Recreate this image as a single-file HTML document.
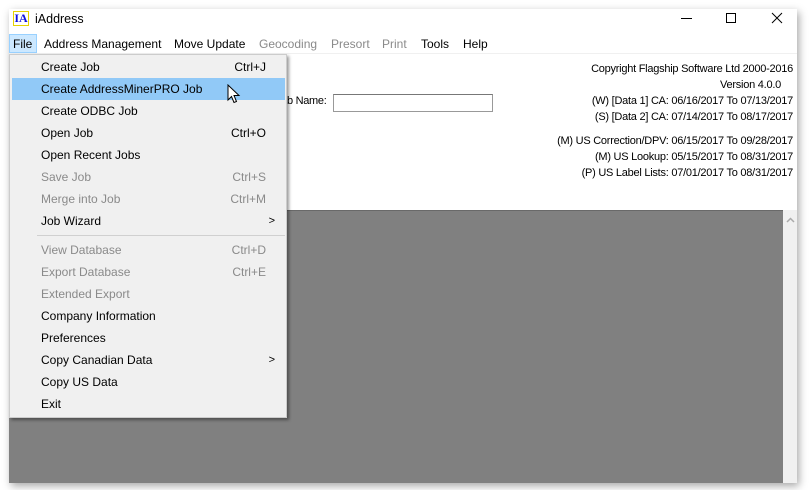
<!DOCTYPE html>
<html><head><meta charset="utf-8"><style>
*{margin:0;padding:0;box-sizing:border-box}
body{width:809px;height:490px;background:#fff;position:relative;overflow:hidden;font-family:"Liberation Sans",sans-serif;font-size:12px;color:#000}
.win{position:absolute;left:9px;top:9px;width:788px;height:474px;background:#fff;box-shadow:2px 3px 8px rgba(0,0,0,.35)}
.a{position:absolute;white-space:nowrap}
.mb{position:absolute;top:37px;font-size:12px}
.dis{color:#8a8a8a}
.r{position:absolute;right:16px;font-size:11px;text-align:right;white-space:nowrap;letter-spacing:-0.25px}
.menu{position:absolute;left:9px;top:54px;width:278px;height:364px;background:#f0f0f0;border:1px solid #ccc;box-shadow:2px 2px 3px rgba(0,0,0,.4)}
.it{position:absolute;left:2px;width:273px;height:22px;line-height:22px;font-size:12px}
.it .t{position:absolute;left:29px}
.it .k{position:absolute;right:19px}
.it .s{position:absolute;right:10px;font-size:11px}
.hl{background:#91c9f7}
</style></head><body>
<div class="win">
 <div class="a" style="left:4px;top:2px;width:16px;height:15px;border:1px solid #e6d200;background:#fff;font-family:'Liberation Serif',serif;font-weight:bold;color:#1010e0;font-size:12px;line-height:13px;text-align:center">IA</div>
 <div class="a" style="left:26px;top:3px;font-size:12.5px">iAddress</div>
 <div class="a" style="left:672px;top:9px;width:11px;height:1px;background:#000"></div>
 <div class="a" style="left:717px;top:4px;width:10px;height:10px;border:1px solid #000"></div>
 <svg class="a" style="left:762px;top:3px" width="12" height="12"><path d="M1 1L11 11M11 1L1 11" stroke="#000" stroke-width="1"/></svg>
 <div class="a" style="left:0;top:25px;width:28px;height:19px;background:#cce8ff;border:1px solid #99d1ff"></div>
 <div class="a" style="left:0;top:44px;width:788px;height:1px;background:#f0f0f0"></div>
</div>
<div class="mb" style="left:13px">File</div>
<div class="mb" style="left:44px">Address Management</div>
<div class="mb" style="left:174px">Move Update</div>
<div class="mb dis" style="left:259px">Geocoding</div>
<div class="mb dis" style="left:331px">Presort</div>
<div class="mb dis" style="left:382px">Print</div>
<div class="mb" style="left:421px">Tools</div>
<div class="mb" style="left:463px">Help</div>

<div class="r" style="top:63px">Copyright Flagship Software Ltd 2000-2016</div>
<div class="r" style="top:79px;right:28px">Version 4.0.0</div>
<div class="r" style="top:95px">(W) [Data 1] CA: 06/16/2017 To 07/13/2017</div>
<div class="r" style="top:111px">(S) [Data 2] CA: 07/14/2017 To 08/17/2017</div>
<div class="r" style="top:135px">(M) US Correction/DPV: 06/15/2017 To 09/28/2017</div>
<div class="r" style="top:151px">(M) US Lookup: 05/15/2017 To 08/31/2017</div>
<div class="r" style="top:167px">(P) US Label Lists: 07/01/2017 To 08/31/2017</div>
<div class="a" style="left:276px;top:95px;font-size:11px;letter-spacing:-0.3px">Job Name:</div>
<div class="a" style="left:333px;top:94px;width:160px;height:18px;border:1px solid #999;border-top-color:#777;background:#fff"></div>

<div class="a" style="left:9px;top:210px;width:774px;height:1px;background:#696969"></div>
<div class="a" style="left:9px;top:211px;width:774px;height:272px;background:#808080"></div>
<div class="a" style="left:783px;top:210px;width:14px;height:273px;background:#f0f0f0"></div>
<svg class="a" style="left:786px;top:217px" width="9" height="6"><path d="M1 5L4.5 1.5L8 5" stroke="#aaa" stroke-width="1.5" fill="none"/></svg>

<div class="menu">
 <div class="it" style="top:1px"><span class="t">Create Job</span><span class="k">Ctrl+J</span></div>
 <div class="it hl" style="top:23px"><span class="t">Create AddressMinerPRO Job</span></div>
 <div class="it" style="top:45px"><span class="t">Create ODBC Job</span></div>
 <div class="it" style="top:67px"><span class="t">Open Job</span><span class="k">Ctrl+O</span></div>
 <div class="it" style="top:89px"><span class="t">Open Recent Jobs</span></div>
 <div class="it dis" style="top:111px"><span class="t">Save Job</span><span class="k">Ctrl+S</span></div>
 <div class="it dis" style="top:133px"><span class="t">Merge into Job</span><span class="k">Ctrl+M</span></div>
 <div class="it" style="top:155px"><span class="t">Job Wizard</span><span class="s">&gt;</span></div>
 <div class="a" style="left:27px;top:180px;width:248px;height:1px;background:#d0d0d0"></div>
 <div class="it dis" style="top:184px"><span class="t">View Database</span><span class="k">Ctrl+D</span></div>
 <div class="it dis" style="top:206px"><span class="t">Export Database</span><span class="k">Ctrl+E</span></div>
 <div class="it dis" style="top:228px"><span class="t">Extended Export</span></div>
 <div class="it" style="top:250px"><span class="t">Company Information</span></div>
 <div class="it" style="top:272px"><span class="t">Preferences</span></div>
 <div class="it" style="top:294px"><span class="t">Copy Canadian Data</span><span class="s">&gt;</span></div>
 <div class="it" style="top:316px"><span class="t">Copy US Data</span></div>
 <div class="it" style="top:338px"><span class="t">Exit</span></div>
</div>
<svg class="a" style="left:227px;top:84px" width="14" height="20"><path d="M1 1V16L4.5 12.5L7 18.5L9.5 17.5L7 11.5H12Z" fill="#fff" stroke="#000" stroke-width="1"/></svg>
</body></html>
